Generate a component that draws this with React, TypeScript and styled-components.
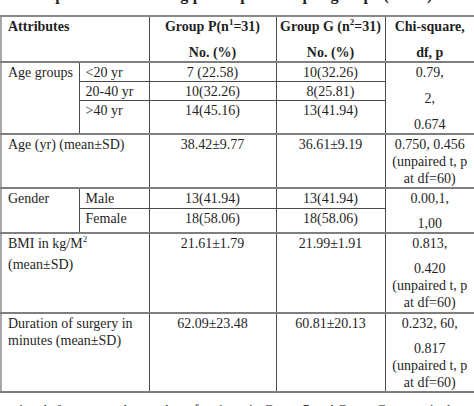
import React from "react";
import styled, { createGlobalStyle } from "styled-components";

const Global = createGlobalStyle`
  html, body { margin: 0; padding: 0; background: #fff; overflow: hidden; }
  body { font-family: "Liberation Serif", "Times New Roman", serif; color: #1f1f1f; }
`;

const Page = styled.div`
  width: 474px;
  height: 406px;
  overflow: hidden;
  display: flex;
  flex-direction: column;
`;

const Title = styled.div`
  margin-top: -13px;
  margin-bottom: 12px;
  padding-left: 14px;
  height: 16px;
  line-height: 16px;
  text-align: center;
  font-weight: bold;
  font-size: 16px;
  letter-spacing: 0.3px;
  white-space: nowrap;
`;

const Table = styled.table`
  width: 474px;
  flex-shrink: 0;
  table-layout: fixed;
  border-collapse: collapse;
  border-top: 2px solid #8a8a8a;
  border-left: 2px solid #a8a8a8;
  border-right: 2px solid #a8a8a8;
  border-bottom: 2px solid #8a8a8a;
  font-size: 14px;
`;

const Row = styled.tr<{ $h: number }>`
  height: ${(p) => p.$h}px;
`;

const Cell = styled.td<{ $align?: "left" | "center"; $thin?: boolean; $bold?: boolean }>`
  vertical-align: top;
  text-align: ${(p) => p.$align ?? "left"};
  padding: 1px 2px 0 ${(p) => (p.$align === "center" ? "2px" : "6px")};
  border-left: 1px solid #4a4a4a;
  border-right: 1px solid #4a4a4a;
  border-bottom: ${(p) => (p.$thin ? "1px solid #4a4a4a" : "2px solid #7f7f7f")};
  font-weight: ${(p) => (p.$bold ? "bold" : "normal")};
  line-height: 17px;
  overflow: hidden;
`;

const Stack = styled.div<{ $gap: number }>`
  display: flex;
  flex-direction: column;
  gap: ${(p) => p.$gap}px;
  line-height: 17px;
`;

const Sup = styled.sup`
  font-size: 9px;
  line-height: 0;
`;

const Foot = styled.div`
  margin-top: 10px;
  padding-left: 12px;
  font-size: 14px;
  line-height: 16px;
  white-space: nowrap;
  flex-shrink: 0;
`;

export default function App() {
  return (
    <Page>
      <Global />
      <Title>parameters among participants as per groups (N=62)</Title>
      <Table>
        <colgroup>
          <col style={{ width: 78 }} />
          <col style={{ width: 70 }} />
          <col style={{ width: 127 }} />
          <col style={{ width: 109 }} />
          <col style={{ width: 90 }} />
        </colgroup>
        <tbody>
          <Row $h={45}>
            <Cell colSpan={2} $bold>
              Attributes
            </Cell>
            <Cell $align="center" $bold>
              <Stack $gap={9}>
                <span>
                  Group P(n<Sup>1</Sup>=31)
                </span>
                <span>No. (%)</span>
              </Stack>
            </Cell>
            <Cell $align="center" $bold>
              <Stack $gap={9}>
                <span>
                  Group G (n<Sup>2</Sup>=31)
                </span>
                <span>No. (%)</span>
              </Stack>
            </Cell>
            <Cell $align="center" $bold>
              <Stack $gap={9}>
                <span>Chi-square,</span>
                <span>df, p</span>
              </Stack>
            </Cell>
          </Row>
          <Row $h={19}>
            <Cell rowSpan={3}>Age groups</Cell>
            <Cell $thin>&lt;20 yr</Cell>
            <Cell $align="center" $thin>7 (22.58)</Cell>
            <Cell $align="center" $thin>10(32.26)</Cell>
            <Cell $align="center" rowSpan={3}>
              <Stack $gap={9}>
                <span>0.79,</span>
                <span>2,</span>
                <span>0.674</span>
              </Stack>
            </Cell>
          </Row>
          <Row $h={19}>
            <Cell $thin>20-40 yr</Cell>
            <Cell $align="center" $thin>10(32.26)</Cell>
            <Cell $align="center" $thin>8(25.81)</Cell>
          </Row>
          <Row $h={33}>
            <Cell>&gt;40 yr</Cell>
            <Cell $align="center">14(45.16)</Cell>
            <Cell $align="center">13(41.94)</Cell>
          </Row>
          <Row $h={52}>
            <Cell colSpan={2}>Age (yr) (mean±SD)</Cell>
            <Cell $align="center">38.42±9.77</Cell>
            <Cell $align="center">36.61±9.19</Cell>
            <Cell $align="center">0.750, 0.456 (unpaired t, p at df=60)</Cell>
          </Row>
          <Row $h={19}>
            <Cell rowSpan={2}>Gender</Cell>
            <Cell $thin>Male</Cell>
            <Cell $align="center" $thin>13(41.94)</Cell>
            <Cell $align="center" $thin>13(41.94)</Cell>
            <Cell $align="center" rowSpan={2}>
              <Stack $gap={8}>
                <span>0.00,1,</span>
                <span>1,00</span>
              </Stack>
            </Cell>
          </Row>
          <Row $h={23}>
            <Cell>Female</Cell>
            <Cell $align="center">18(58.06)</Cell>
            <Cell $align="center">18(58.06)</Cell>
          </Row>
          <Row $h={80}>
            <Cell colSpan={2}>
              <Stack $gap={4}>
                <span>
                  BMI in kg/M<Sup>2</Sup>
                </span>
                <span>(mean±SD)</span>
              </Stack>
            </Cell>
            <Cell $align="center">21.61±1.79</Cell>
            <Cell $align="center">21.99±1.91</Cell>
            <Cell $align="center">
              <Stack $gap={8}>
                <span>0.813,</span>
                <span>0.420 (unpaired t, p at df=60)</span>
              </Stack>
            </Cell>
          </Row>
          <Row $h={78}>
            <Cell colSpan={2}>Duration of surgery in minutes (mean±SD)</Cell>
            <Cell $align="center">62.09±23.48</Cell>
            <Cell $align="center">60.81±20.13</Cell>
            <Cell $align="center">
              <Stack $gap={8}>
                <span>0.232, 60,</span>
                <span>0.817 (unpaired t, p at df=60)</span>
              </Stack>
            </Cell>
          </Row>
        </tbody>
      </Table>
      <Foot>n¹ and n² represent the number of patients in Group P and Group G respectively</Foot>
    </Page>
  );
}
